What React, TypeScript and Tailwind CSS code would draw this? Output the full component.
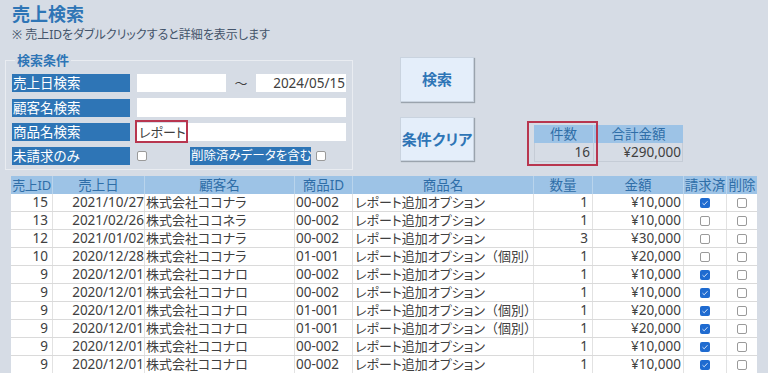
import React from "react";

type Row = {
  id: number;
  date: string;
  customer: string;
  productId: string;
  product: string;
  note?: string;
  qty: number;
  amount: string;
  billed: boolean;
  deleted: boolean;
};

const rows: Row[] = [
  { id: 15, date: "2021/10/27", customer: "株式会社ココナラ", productId: "00-002", product: "レポート追加オプション", qty: 1, amount: "¥10,000", billed: true, deleted: false },
  { id: 13, date: "2021/02/26", customer: "株式会社ココネラ", productId: "00-002", product: "レポート追加オプション", qty: 1, amount: "¥10,000", billed: false, deleted: false },
  { id: 12, date: "2021/01/02", customer: "株式会社ココナラ", productId: "00-002", product: "レポート追加オプション", qty: 3, amount: "¥30,000", billed: false, deleted: false },
  { id: 10, date: "2020/12/28", customer: "株式会社ココナラ", productId: "01-001", product: "レポート追加オプション", note: "（個別）", qty: 1, amount: "¥20,000", billed: false, deleted: false },
  { id: 9, date: "2020/12/01", customer: "株式会社ココナロ", productId: "00-002", product: "レポート追加オプション", qty: 1, amount: "¥10,000", billed: true, deleted: false },
  { id: 9, date: "2020/12/01", customer: "株式会社ココナロ", productId: "00-002", product: "レポート追加オプション", qty: 1, amount: "¥10,000", billed: true, deleted: false },
  { id: 9, date: "2020/12/01", customer: "株式会社ココナロ", productId: "01-001", product: "レポート追加オプション", note: "（個別）", qty: 1, amount: "¥20,000", billed: true, deleted: false },
  { id: 9, date: "2020/12/01", customer: "株式会社ココナロ", productId: "01-001", product: "レポート追加オプション", note: "（個別）", qty: 1, amount: "¥20,000", billed: true, deleted: false },
  { id: 9, date: "2020/12/01", customer: "株式会社ココナロ", productId: "00-002", product: "レポート追加オプション", qty: 1, amount: "¥10,000", billed: true, deleted: false },
  { id: 9, date: "2020/12/01", customer: "株式会社ココナロ", productId: "00-002", product: "レポート追加オプション", qty: 1, amount: "¥10,000", billed: true, deleted: false },
];

const headers = ["売上ID", "売上日", "顧客名", "商品ID", "商品名", "数量", "金額", "請求済", "削除"];

function Check({ checked }: { checked: boolean }) {
  if (checked) {
    return (
      <span className="flex h-[10px] w-[10px] items-center justify-center rounded-[2px] bg-[#1f6bd0]">
        <svg width="8" height="8" viewBox="0 0 8 8">
          <path d="M1.5 4.2 L3.2 5.8 L6.5 2.2" fill="none" stroke="#cfe0f7" strokeWidth="1" />
        </svg>
      </span>
    );
  }
  return <span className="block h-[10px] w-[10px] rounded-[2px] border border-[#9a9a9a] bg-white" />;
}

function Label({ children, w = "w-[118px]", size = "text-[13.5px]" }: { children: React.ReactNode; w?: string; size?: string }) {
  return (
    <div className={`${w} ${size} h-[18px] whitespace-nowrap overflow-hidden bg-[#2e75b6] pl-[1px] leading-[18px] text-white`}>
      {children}
    </div>
  );
}

export default function App() {
  return (
    <div className="h-[373px] w-[768px] overflow-hidden bg-[#d6dce5] font-['Noto_Sans','Noto_Sans_CJK_JP',sans-serif] text-[#404040] [font-feature-settings:'palt']">
      <div className="h-[27px] pl-[12px] pt-[1px] text-[18px] font-bold leading-[26px] text-[#2e75b6]">売上検索</div>
      <div className="h-[15px] pl-[12px] text-[12px] leading-[15px] text-[#44546a]">※ 売上IDをダブルクリックすると詳細を表示します</div>

      <div className="mt-[10px] flex items-start">
        <fieldset className="ml-[5px] h-[118px] w-[348px] border border-[#e9ecf1] pl-[6px] pr-[5px]">
          <legend className="ml-[3px] px-[2px] text-[13px] font-bold leading-[16px] text-[#2e75b6]">検索条件</legend>
          <div className="mt-[6px] flex flex-col gap-[6px]">
            <div className="flex items-center">
              <Label>売上日検索</Label>
              <div className="ml-[7px] h-[18px] w-[89px] bg-white" />
              <div className="w-[30px] text-center text-[13px] leading-[18px]">〜</div>
              <div className="h-[18px] w-[90px] bg-white pr-[1px] text-right text-[13.5px] leading-[18px]">2024/05/15</div>
            </div>
            <div className="flex items-center">
              <Label>顧客名検索</Label>
              <div className="ml-[7px] h-[19px] w-[209px] bg-white" />
            </div>
            <div className="flex items-center">
              <Label>商品名検索</Label>
              <div className="relative ml-[7px] h-[18px] w-[209px] bg-white pl-[2px] text-[13px] leading-[18px]">
                レポート
                <div className="absolute left-[-2px] top-[-3px] h-[23px] w-[53px] border-2 border-[#b8364f]" />
              </div>
            </div>
            <div className="flex items-center">
              <Label>未請求のみ</Label>
              <div className="ml-[7px] w-[53px]">
                <Check checked={false} />
              </div>
              <Label w="w-[121px]" size="text-[12.5px]">削除済みデータを含む</Label>
              <div className="ml-[5px]">
                <Check checked={false} />
              </div>
            </div>
          </div>
        </fieldset>

        <div className="ml-[47px] mt-[5px] flex flex-col gap-[15px]">
          <button className="h-[45px] w-[74px] border border-[#c9d3df] bg-[#e4eefa] text-[15px] font-bold text-[#2e75b6] shadow-[1px_1px_1px_#9aa3ad]">
            検索
          </button>
          <button className="h-[44px] w-[74px] border border-[#c9d3df] bg-[#e4eefa] text-[15px] font-bold text-[#2e75b6] shadow-[1px_1px_1px_#9aa3ad]">
            条件クリア
          </button>
        </div>

        <div className="relative ml-[60px] mt-[73px]">
          <div className="grid grid-cols-[60px_89px] text-[13.5px] leading-[18px]">
            <div className="border-r border-[#b8d2ea] bg-[#9dc3e6] text-center text-[#2f6ea8]">件数</div>
            <div className="bg-[#9dc3e6] text-center text-[#2f6ea8]">合計金額</div>
            <div className="border-r border-b border-l border-[#c5ccd6] pr-[3px] text-right">16</div>
            <div className="border-r border-b border-[#c5ccd6] pr-[1px] text-right">¥290,000</div>
          </div>
          <div className="absolute left-[-7px] top-[-4px] h-[45px] w-[71px] border-2 border-[#b8364f]" />
        </div>
      </div>

      <div className="ml-[11px] mt-[6px] w-[746px]">
        <div className="grid h-[18px] grid-cols-[42px_92px_150px_58px_181px_59px_91px_43px_30px] bg-[#9dc3e6] text-[13.5px] leading-[18px] text-[#2f6ea8]">
          {headers.map((h, i) => (
            <div
              key={h}
              className={`whitespace-nowrap text-center ${i === 0 ? "text-[13px] tracking-[-0.3px]" : ""} ${i < headers.length - 1 ? "border-r border-[#b9d4ec]" : ""}`}
            >
              {h}
            </div>
          ))}
        </div>
        {rows.map((r, i) => (
          <div
            key={`row-${i}`}
            className="grid h-[18px] grid-cols-[42px_92px_150px_58px_181px_59px_91px_43px_30px] border-b border-[#dadada] bg-white text-[13.5px] leading-[17px]"
          >
            <div className="border-r border-[#e2e2e2] pr-[4px] text-right">{r.id}</div>
            <div className="border-r border-[#e2e2e2] text-right">{r.date}</div>
            <div className="border-r border-[#e2e2e2] pl-[1px] text-[13px]">{r.customer}</div>
            <div className="border-r border-[#e2e2e2] pl-[1px]">{r.productId}</div>
            <div className="whitespace-nowrap border-r border-[#e2e2e2] pl-[2px] text-[13px]">
              {r.product}
              {r.note && <span className="[font-feature-settings:normal]">{r.note}</span>}
            </div>
            <div className="border-r border-[#e2e2e2] pr-[4px] text-right">{r.qty}</div>
            <div className="border-r border-[#e2e2e2] pr-[2px] text-right">{r.amount}</div>
            <div className="flex items-center justify-center border-r border-[#e2e2e2]">
              <Check checked={r.billed} />
            </div>
            <div className="flex items-center justify-center">
              <Check checked={r.deleted} />
            </div>
          </div>
        ))}
      </div>
    </div>
  );
}
